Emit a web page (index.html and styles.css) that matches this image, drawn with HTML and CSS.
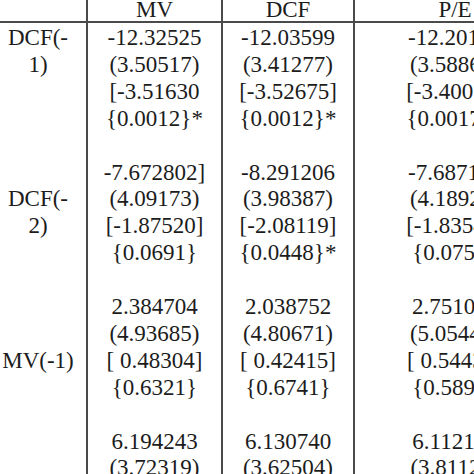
FILE: index.html
```html
<!DOCTYPE html>
<html>
<head>
<meta charset="utf-8">
<link rel="stylesheet" href="styles.css">
</head>
<body>
<div class="table">
  <div class="cell head lab"></div>
  <div class="cell head col">MV</div>
  <div class="cell head col">DCF</div>
  <div class="cell head col">P/E</div>

  <div class="cell lab first">DCF(-<br>1)</div>
  <div class="cell col first">-12.32525<br>(3.50517)<br>[-3.51630<br>{0.0012}*</div>
  <div class="cell col first">-12.03599<br>(3.41277)<br>[-3.52675]<br>{0.0012}*</div>
  <div class="cell col first">-12.20156<br>(3.58864)<br>[-3.40012]<br>{0.0017}*</div>

  <div class="cell lab off1">DCF(-<br>2)</div>
  <div class="cell col">-7.672802]<br>(4.09173)<br>[-1.87520]<br>{0.0691}</div>
  <div class="cell col">-8.291206<br>(3.98387)<br>[-2.08119]<br>{0.0448}*</div>
  <div class="cell col">-7.687164<br>(4.18925)<br>[-1.83543]<br>{0.0751}</div>

  <div class="cell lab off2">MV(-1)</div>
  <div class="cell col">2.384704<br>(4.93685)<br>[ 0.48304]<br>{0.6321}</div>
  <div class="cell col">2.038752<br>(4.80671)<br>[ 0.42415]<br>{0.6741}</div>
  <div class="cell col">2.751032<br>(5.05443)<br>[ 0.54432]<br>{0.5891}</div>

  <div class="cell lab off2">MV(-2)</div>
  <div class="cell col">6.194243<br>(3.72319)<br>[ 1.66369]<br>{0.1044}</div>
  <div class="cell col">6.130740<br>(3.62504)<br>[ 1.69122]<br>{0.0981}</div>
  <div class="cell col">6.112123<br>(3.81123)<br>[ 1.60372]<br>{0.1185}</div>
</div>
</body>
</html>
```
FILE: styles.css
```css
html, body {
  margin: 0;
  padding: 0;
  width: 474px;
  height: 474px;
  overflow: hidden;
  background: #ffffff;
}

.table {
  display: grid;
  grid-template-columns: 86px 135px 132px 202px;
  width: 555px;
  font-family: "Liberation Serif", "Times New Roman", serif;
  font-size: 23px;
  color: #1c1c1c;
}

.cell {
  line-height: 26.9px;
  padding-bottom: 26.9px;
  text-align: center;
  white-space: nowrap;
}

.col {
  border-left: 2px solid #4a4a4a;
}

.lab {
  padding-right: 10px;
}

.head {
  height: 21px;
  line-height: 20.5px;
  padding-bottom: 0;
  overflow: hidden;
  border-bottom: 2px solid #4a4a4a;
}

.first {
  padding-top: 2px;
}

.off1 {
  padding-top: 26.9px;
}

.off2 {
  padding-top: 53.8px;
}
```
